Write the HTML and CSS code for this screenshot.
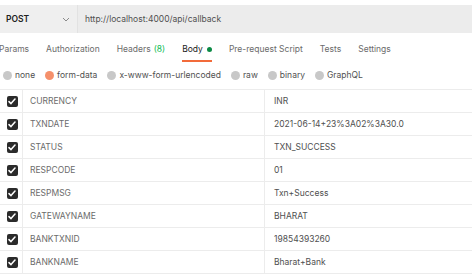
FILE: index.html
```html
<!DOCTYPE html>
<html lang="en">
<head>
    <meta charset="UTF-8">
    <title>POST callback</title>
    <link rel="stylesheet" href="styles.css">
</head>
<body>
    <div class="url-bar">
        <div class="method">
            <span>POST</span>
            <svg class="chevron" width="8" height="5" viewBox="0 0 8 5"><path d="M1 1l3 3 3-3" fill="none" stroke="#8a8a8a" stroke-width="1"/></svg>
        </div>
        <div class="url">http://localhost:4000/api/callback</div>
    </div>

    <!-- request tabs -->
    <div class="tabs">
        <div class="tab">Params</div>
        <div class="tab">Authorization</div>
        <div class="tab">Headers <span class="count">(8)</span></div>
        <div class="tab active">Body <span class="dot"></span></div>
        <div class="tab">Pre-request Script</div>
        <div class="tab">Tests</div>
        <div class="tab">Settings</div>
    </div>

    <div class="body-types">
        <label class="radio"><span class="circle"></span>none</label>
        <label class="radio"><span class="circle checked"></span>form-data</label>
        <label class="radio"><span class="circle"></span>x-www-form-urlencoded</label>
        <label class="radio"><span class="circle"></span>raw</label>
        <label class="radio"><span class="circle"></span>binary</label>
        <label class="radio"><span class="circle"></span>GraphQL</label>
    </div>

    <div class="params" id="params"></div>

    <script>
        const rows = [
            ['CURRENCY', 'INR'],
            ['TXNDATE', '2021-06-14+23%3A02%3A30.0'],
            ['STATUS', 'TXN_SUCCESS'],
            ['RESPCODE', '01'],
            ['RESPMSG', 'Txn+Success'],
            ['GATEWAYNAME', 'BHARAT'],
            ['BANKTXNID', '19854393260'],
            ['BANKNAME', 'Bharat+Bank']
        ];

        const table = document.getElementById('params');
        rows.forEach(function(r) {
            const row = document.createElement('div');
            row.className = 'row';
            row.innerHTML =
                '<div class="cell check"><span class="box"><svg width="8" height="7" viewBox="0 0 8 7"><path d="M1 3.6l2 2 4-4.6" fill="none" stroke="#fff" stroke-width="1.5" stroke-linecap="round" stroke-linejoin="round"/></svg></span></div>' +
                '<div class="cell key">' + r[0] + '</div>' +
                '<div class="cell value">' + r[1] + '</div>';
            table.appendChild(row);
        });
    </script>
</body>
</html>
```

FILE: styles.css
```css
body {
    margin: 0;
    font-family: Inter, "Noto Sans", sans-serif;
    font-size: 8.5px;
    color: #6b6b6b;
    background-color: #fff;
    overflow: hidden;
}
.url-bar {
    display: flex;
    height: 28px;
    margin: 5px 2px 0 0;
    background-color: #ececec;
}
.method {
    width: 78px;
    display: flex;
    align-items: center;
    justify-content: space-between;
    padding: 0 7px 0 6px;
    box-sizing: border-box;
    background-color: #efefef;
    border-right: 1px solid #e2e2e2;
    color: #212121;
    font-weight: 600;
}
.url {
    display: flex;
    align-items: center;
    padding-left: 7px;
    color: #505050;
}
.tabs {
    display: flex;
    gap: 17px;
    margin-left: -1px;
    height: 29px;
}
.tab {
    display: flex;
    align-items: center;
    padding-top: 5px;
    border-bottom: 2px solid transparent;
    box-sizing: border-box;
    white-space: nowrap;
}
.tab.active {
    color: #212121;
    border-bottom-color: #f26b3a;
}
.count {
    color: #0cbb52;
    margin-left: 3px;
}
.dot {
    width: 5px;
    height: 5px;
    border-radius: 50%;
    background-color: #0b8a45;
    margin-left: 4px;
}
.body-types {
    display: flex;
    gap: 10px;
    height: 26px;
    align-items: center;
    padding-left: 3px;
}
.radio {
    display: flex;
    align-items: center;
    gap: 3px;
    color: #505050;
}
.circle {
    width: 9px;
    height: 9px;
    border-radius: 50%;
    background-color: #c8c8c8;
}
.circle.checked {
    background-color: #f26b3a;
    opacity: 0.75;
}
.params {
    margin-top: 1px;
    margin-right: 2px;
    border-top: 1px solid #ececec;
}
.row {
    display: grid;
    grid-template-columns: 23px 242px 1fr;
    height: 23px;
    border-bottom: 1px solid #ececec;
    box-sizing: border-box;
}
.cell {
    display: flex;
    align-items: center;
}
.check {
    justify-content: center;
    border-right: 1px solid #ececec;
    padding-left: 2px;
}
.box {
    width: 11px;
    height: 11px;
    border-radius: 2px;
    background-color: #2b2b2b;
    display: flex;
    align-items: center;
    justify-content: center;
}
.key {
    padding-left: 7px;
    border-right: 1px solid #ececec;
}
.value {
    padding-left: 9px;
    color: #505050;
}
```
